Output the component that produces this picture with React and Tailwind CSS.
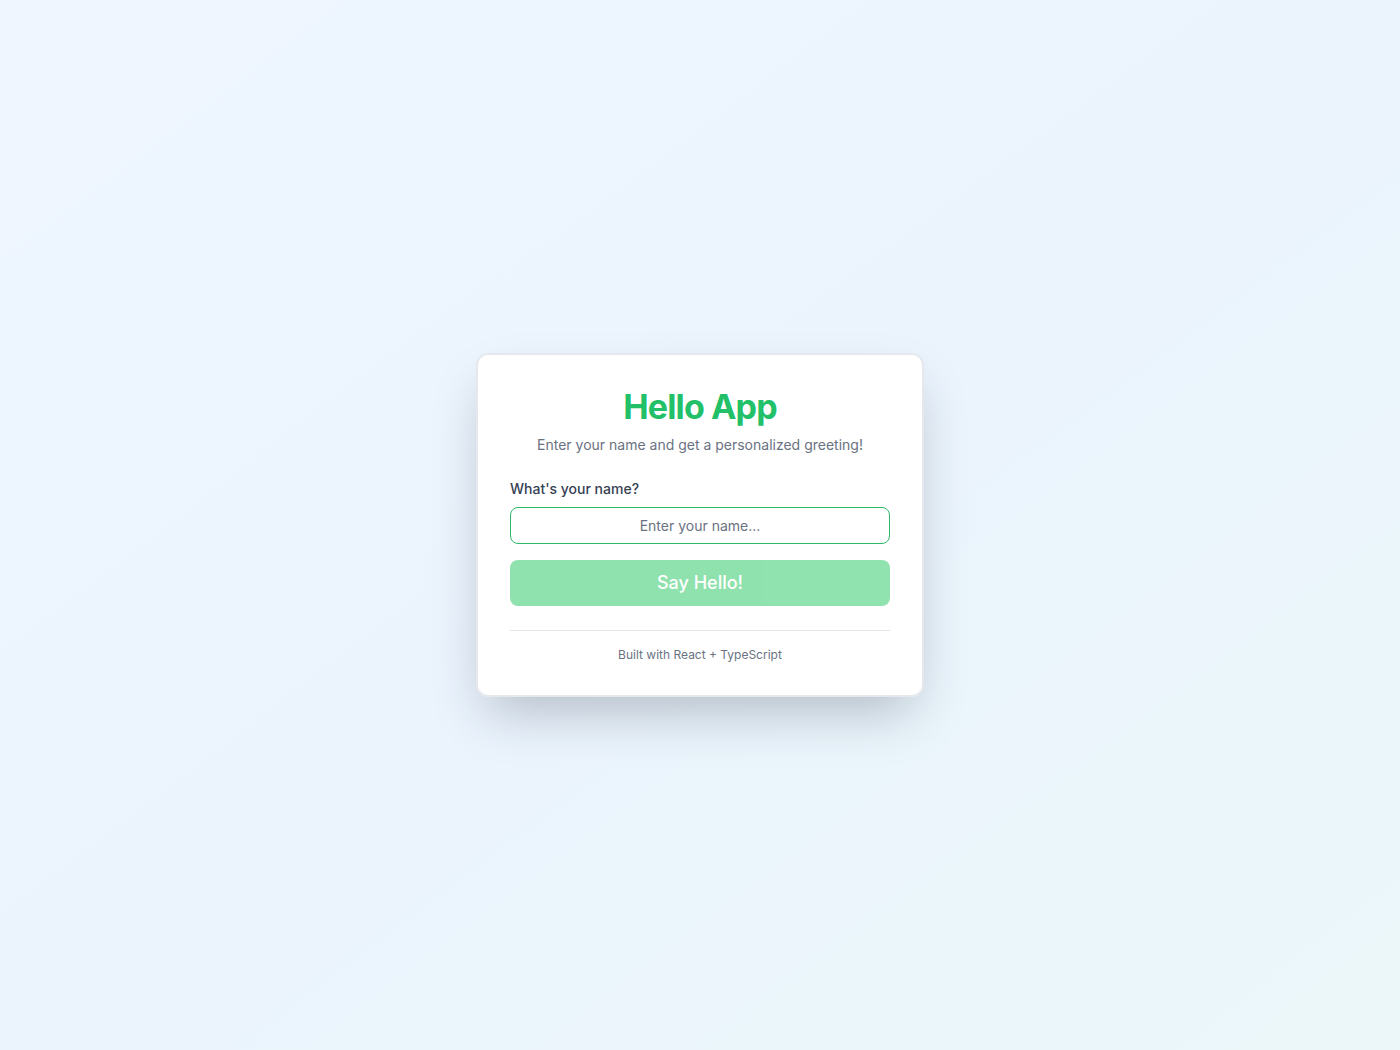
import React, { useState } from 'react';

function App() {
  const [name, setName] = useState('');

  return (
    <div
      className="min-h-screen bg-gradient-to-br from-[#eff6ff] via-[#ebf4fd] to-[#ebf7f9] flex items-center justify-center p-4"
      style={{ fontFamily: 'Inter, "Noto Sans", sans-serif' }}
    >
      <div className="bg-white w-[448px] p-8 rounded-xl border-2 border-[#e5e9ee] shadow-[0_25px_50px_-12px_rgba(30,41,59,0.28)] text-center">
        <h1 className="text-[34px] leading-10 font-bold text-[#22c068] tracking-tight mb-2">Hello App</h1>
        <p className="text-sm leading-5 text-gray-500 mb-6">Enter your name and get a personalized greeting!</p>

        <div className="text-left">
          <label htmlFor="name" className="block text-sm leading-5 font-medium text-gray-700 mb-2">
            What's your name?
          </label>
          <input
            id="name"
            type="text"
            autoFocus
            value={name}
            onChange={e => setName(e.target.value)}
            placeholder="Enter your name..."
            className="w-full h-[37px] px-4 rounded-lg border border-[#2fb866] text-center text-sm text-gray-700 placeholder:text-gray-500 outline-none"
          />
          <button
            disabled={!name.trim()}
            className="mt-4 w-full h-[46px] rounded-lg bg-[#22c55e] text-white text-lg font-medium disabled:opacity-50"
          >
            Say Hello!
          </button>
        </div>

        <div className="mt-6 pt-4 border-t border-gray-200">
          <p className="text-xs leading-4 text-gray-500">Built with React + TypeScript</p>
        </div>
      </div>
    </div>
  );
}

export default App;
